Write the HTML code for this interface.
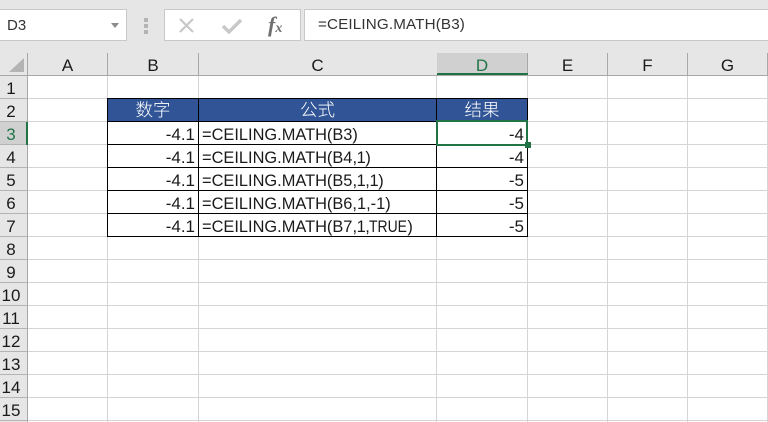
<!DOCTYPE html>
<html><head><meta charset="utf-8"><style>
html,body{margin:0;padding:0;background:#fff;}
#p{position:relative;width:768px;height:422px;overflow:hidden;background:#fff;font-family:"Liberation Sans","Noto Sans CJK SC",sans-serif;color:#1a1a1a;}
#p div{position:absolute;box-sizing:border-box;}
.t{font-size:17px;line-height:24px;height:22px;white-space:nowrap;}
.f{font-size:16.4px;}
.n{letter-spacing:-.4px;}
.u{display:inline-block;transform:scaleX(.85);transform-origin:left center;margin-right:-6.7px;}
.c{text-align:center;}
.r{text-align:right;}
.h{background:#305496;color:#fff;text-align:center;font-size:17.5px;line-height:23px;height:22px;font-weight:300;}
.hl{background:#d0d0d0;}
</style></head><body><div id="p">
<div style="left:0;top:0;width:768px;height:53px;background:#e6e6e6"></div>
<div style="left:0;top:9px;width:127px;height:32px;background:#fff;border:1px solid #c8c8c8;border-left:none"></div>
<div class="t" style="left:7px;top:15px;font-size:15px;line-height:22px;color:#333">D3</div>
<div style="left:111px;top:23px;width:0;height:0;border-left:4px solid transparent;border-right:4px solid transparent;border-top:5px solid #8c8c8c"></div>
<div style="left:144px;top:18px;width:4px;height:4px;background:#b4b4b4"></div>
<div style="left:144px;top:24px;width:4px;height:4px;background:#b4b4b4"></div>
<div style="left:144px;top:30px;width:4px;height:4px;background:#b4b4b4"></div>
<div style="left:164px;top:9px;width:137px;height:32px;background:#fff;border:1px solid #c8c8c8"></div>
<svg style="position:absolute;left:164px;top:9px" width="137" height="32"><path d="M16 10L29 23M29 10L16 23" stroke="#c8c8c8" stroke-width="2.2" fill="none"/><path d="M59 17L65 23L77 11" stroke="#c8c8c8" stroke-width="3.4" fill="none"/></svg>
<div class="t" style="left:268px;top:13px;font-family:'Liberation Serif',serif;font-style:italic;font-weight:bold;font-size:22px;line-height:24px;color:#707070">f<span style="font-size:14px">x</span></div>
<div style="left:304px;top:9px;width:470px;height:32px;background:#fff;border:1px solid #c8c8c8"></div>
<div class="t" style="left:318px;top:14px;font-size:15.2px;line-height:22px;color:#333;letter-spacing:.15px">=CEILING.MATH(B3)</div>

<!-- header row/col -->
<div style="left:0;top:53px;width:768px;height:23px;background:#e6e6e6"></div>
<div style="left:0;top:76px;width:27px;height:346px;background:#e6e6e6"></div>
<div class="hl" style="left:437px;top:53px;width:90px;height:22px"></div>
<div class="hl" style="left:0;top:122px;width:27px;height:22px"></div>
<svg style="position:absolute;left:0;top:53px" width="768" height="369">
<polygon points="9,19 24,19 24,5" fill="#b4b4b4"/>
<g fill="#a8a8a8">
<rect x="27" y="0" width="1" height="23"/><rect x="107" y="0" width="1" height="23"/><rect x="198" y="0" width="1" height="23"/><rect x="527" y="0" width="1" height="23"/><rect x="607" y="0" width="1" height="23"/><rect x="687" y="0" width="1" height="23"/><rect x="767" y="0" width="1" height="23"/>
<rect x="0" y="22" width="768" height="1"/>
<rect x="27" y="0" width="1" height="369"/>
</g>
<g fill="#b4b4b4">
<rect x="0" y="45" width="27" height="1"/><rect x="0" y="68" width="27" height="1"/><rect x="0" y="91" width="27" height="1"/><rect x="0" y="114" width="27" height="1"/><rect x="0" y="137" width="27" height="1"/><rect x="0" y="160" width="27" height="1"/><rect x="0" y="183" width="27" height="1"/><rect x="0" y="206" width="27" height="1"/><rect x="0" y="229" width="27" height="1"/><rect x="0" y="252" width="27" height="1"/><rect x="0" y="275" width="27" height="1"/><rect x="0" y="298" width="27" height="1"/><rect x="0" y="321" width="27" height="1"/><rect x="0" y="344" width="27" height="1"/><rect x="0" y="367" width="27" height="1"/>
</g>
<g fill="#d4d4d4">
<rect x="28" y="45" width="740" height="1"/><rect x="28" y="68" width="740" height="1"/><rect x="28" y="91" width="740" height="1"/><rect x="28" y="114" width="740" height="1"/><rect x="28" y="137" width="740" height="1"/><rect x="28" y="160" width="740" height="1"/><rect x="28" y="183" width="740" height="1"/><rect x="28" y="206" width="740" height="1"/><rect x="28" y="229" width="740" height="1"/><rect x="28" y="252" width="740" height="1"/><rect x="28" y="275" width="740" height="1"/><rect x="28" y="298" width="740" height="1"/><rect x="28" y="321" width="740" height="1"/><rect x="28" y="344" width="740" height="1"/><rect x="28" y="367" width="740" height="1"/>
<rect x="107" y="23" width="1" height="346"/><rect x="198" y="23" width="1" height="346"/><rect x="436" y="23" width="1" height="346"/><rect x="527" y="23" width="1" height="346"/><rect x="607" y="23" width="1" height="346"/><rect x="687" y="23" width="1" height="346"/><rect x="767" y="23" width="1" height="346"/>
</g>
</svg>
<div class="t c" style="left:28px;top:54px;width:79px">A</div>
<div class="t c" style="left:108px;top:54px;width:90px">B</div>
<div class="t c" style="left:199px;top:54px;width:237px">C</div>
<div class="t c" style="left:437px;top:54px;width:90px;color:#217346">D</div>
<div class="t c" style="left:528px;top:54px;width:79px">E</div>
<div class="t c" style="left:608px;top:54px;width:79px">F</div>
<div class="t c" style="left:688px;top:54px;width:79px">G</div>
<div style="left:437px;top:73px;width:91px;height:2px;background:#217346"></div>

<div class="t c" style="left:0;top:77px;width:22px">1</div>
<div class="t c" style="left:0;top:100px;width:22px">2</div>
<div class="t c" style="left:0;top:123px;width:22px;color:#217346">3</div>
<div class="t c" style="left:0;top:146px;width:22px">4</div>
<div class="t c" style="left:0;top:169px;width:22px">5</div>
<div class="t c" style="left:0;top:192px;width:22px">6</div>
<div class="t c" style="left:0;top:215px;width:22px">7</div>
<div class="t c" style="left:0;top:238px;width:22px">8</div>
<div class="t c" style="left:0;top:261px;width:22px">9</div>
<div class="t c" style="left:0;top:284px;width:22px">10</div>
<div class="t c" style="left:0;top:307px;width:22px">11</div>
<div class="t c" style="left:0;top:330px;width:22px">12</div>
<div class="t c" style="left:0;top:353px;width:22px">13</div>
<div class="t c" style="left:0;top:376px;width:22px">14</div>
<div class="t c" style="left:0;top:399px;width:22px">15</div>
<div style="left:26px;top:122px;width:2px;height:23px;background:#217346"></div>

<!-- table -->
<div class="h" style="left:108px;top:99px;width:90px">数字</div>
<div class="h" style="left:199px;top:99px;width:237px">公式</div>
<div class="h" style="left:437px;top:99px;width:90px">结果</div>
<svg style="position:absolute;left:0;top:0" width="768" height="422"><g fill="#000">
<rect x="107" y="98" width="421" height="1"/><rect x="107" y="121" width="421" height="1"/><rect x="107" y="144" width="421" height="1"/><rect x="107" y="167" width="421" height="1"/><rect x="107" y="190" width="421" height="1"/><rect x="107" y="213" width="421" height="1"/><rect x="107" y="236" width="421" height="1"/>
<rect x="107" y="98" width="1" height="139"/><rect x="198" y="98" width="1" height="139"/><rect x="436" y="98" width="1" height="139"/><rect x="527" y="98" width="1" height="139"/>
</g></svg>

<div class="t r" style="left:108px;top:123px;width:87px">-4.1</div>
<div class="t r" style="left:108px;top:146px;width:87px">-4.1</div>
<div class="t r" style="left:108px;top:169px;width:87px">-4.1</div>
<div class="t r" style="left:108px;top:192px;width:87px">-4.1</div>
<div class="t r" style="left:108px;top:215px;width:87px">-4.1</div>
<div class="t f" style="left:202px;top:123px">=CEILING.MATH(B3)</div>
<div class="t f" style="left:202px;top:146px">=CEILING.MATH(B4<span class="n">,1</span>)</div>
<div class="t f" style="left:202px;top:169px">=CEILING.MATH(B5<span class="n">,1,1</span>)</div>
<div class="t f" style="left:202px;top:192px">=CEILING.MATH(B6,1,-1)</div>
<div class="t f" style="left:202px;top:215px">=CEILING.MATH(B7<span class="n">,1,</span><span class="u">TRUE</span>)</div>
<div class="t r" style="left:437px;top:123px;width:87px">-4</div>
<div class="t r" style="left:437px;top:146px;width:87px">-4</div>
<div class="t r" style="left:437px;top:169px;width:87px">-5</div>
<div class="t r" style="left:437px;top:192px;width:87px">-5</div>
<div class="t r" style="left:437px;top:215px;width:87px">-5</div>

<!-- selection -->
<div style="left:436px;top:120px;width:92px;height:26px;border:2px solid #217346"></div>
<div style="left:525px;top:142px;width:6px;height:6px;background:#217346"></div>
</div></body></html>
